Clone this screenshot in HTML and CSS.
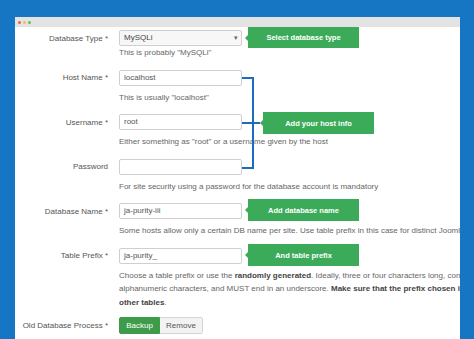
FILE: index.html
```html
<!DOCTYPE html>
<html>
<head>
<title>Database Configuration</title>
<link rel="stylesheet" href="styles.css">
</head>
<body>
<div class="window">
	<div class="title_bar">
		<span class="dot dot_red"></span>
		<span class="dot dot_yellow"></span>
		<span class="dot dot_green"></span>
	</div>
	<div class="form_body">
		<div class="form_row">
			<label class="row_label">Database Type *</label>
			<div class="chs_select">MySQLi<span class="caret">&#9662;</span></div>
			<div class="help help_tight">This is probably "MySQLi"</div>
		</div>
		<div class="form_row">
			<label class="row_label">Host Name *</label>
			<div class="chs_edit">localhost</div>
			<div class="help">This is usually "localhost"</div>
		</div>
		<div class="form_row">
			<label class="row_label">Username *</label>
			<div class="chs_edit">root</div>
			<div class="help">Either something as "root" or a username given by the host</div>
		</div>
		<div class="form_row">
			<label class="row_label">Password</label>
			<div class="chs_edit"></div>
			<div class="help">For site security using a password for the database account is mandatory</div>
		</div>
		<div class="form_row">
			<label class="row_label">Database Name *</label>
			<div class="chs_edit">ja-purity-iii</div>
			<div class="help">Some hosts allow only a certain DB name per site. Use table prefix in this case for distinct Joomla! sites.</div>
		</div>
		<div class="form_row">
			<label class="row_label">Table Prefix *</label>
			<div class="chs_edit">ja-purity_</div>
			<div class="help help_multi">Choose a table prefix or use the <b>randomly generated</b>. Ideally, three or four characters long, contain only<br>alphanumeric characters, and MUST end in an underscore. <b>Make sure that the prefix chosen is not used by</b><br><b>other tables</b>.</div>
		</div>
		<div class="form_row row_last">
			<label class="row_label">Old Database Process *</label>
			<div class="btn_group">
				<button class="btn btn_active">Backup</button>
				<button class="btn">Remove</button>
			</div>
		</div>
	</div>

	<!-- annotation layer -->
	<div class="bracket"></div>
	<div class="bracket_tick"></div>
	<div class="callout" id="callout_type">Select database type</div>
	<div class="callout" id="callout_host">Add your host info</div>
	<div class="callout" id="callout_dbname">Add database name</div>
	<div class="callout" id="callout_prefix">And table prefix</div>
</div>
</body>
</html>
```

FILE: styles.css
```css
body
{
	margin : 0;
	height : 339px;
	overflow : hidden;
	background-color : #1776c4;
	font-family : "Liberation Sans", Arial, sans-serif;
}
.window
{
	position : relative;
	margin : 17px 0 0 15px;
	width : 445px;
	height : 330px;
	background-color : white;
	overflow : hidden;
}
.title_bar
{
	display : flex;
	align-items : center;
	gap : 2px;
	height : 10px;
	padding-left : 3px;
	background-color : #e3e3e3;
}
.dot
{
	width : 3px;
	height : 3px;
	border-radius : 50%;
}
.dot_red { background-color : #ec5f5f; }
.dot_yellow { background-color : #f0bf4c; }
.dot_green { background-color : #5cc25c; }

.form_body
{
	padding-top : 3px;
}
.form_row
{
	display : grid;
	grid-template-columns : 93px 123px;
	column-gap : 11px;
	margin-bottom : 9.5px;
}
.row_label
{
	grid-row : 1;
	grid-column : 1;
	align-self : center;
	text-align : right;
	font-size : 8px;
	color : #555;
	white-space : nowrap;
}
.chs_edit, .chs_select
{
	grid-row : 1;
	grid-column : 2;
	box-sizing : border-box;
	height : 16px;
	padding-left : 4px;
	border : 1px solid #cfcfcf;
	border-radius : 2px;
	font-size : 8px;
	line-height : 14px;
	color : #555;
}
.chs_select
{
	display : flex;
	justify-content : space-between;
	padding-right : 3px;
	background-color : #f7f7f7;
	color : #444;
}
.caret
{
	font-size : 7px;
	color : #666;
}
.help
{
	grid-column : 2;
	margin-top : 5px;
	font-size : 8px;
	line-height : 14px;
	color : #666;
	white-space : nowrap;
}
.help b
{
	color : #444;
}
.help_tight
{
	margin-top : 0;
}
.help_multi
{
	line-height : 13.5px;
}
.row_last
{
	margin-top : -2px;
}
.btn_group
{
	grid-row : 1;
	grid-column : 2;
	display : flex;
}
.btn
{
	height : 17px;
	padding : 0;
	width : 43px;
	font-family : inherit;
	font-size : 8px;
	color : #555;
	background-color : #f3f3f3;
	border : 1px solid #d4d4d4;
	border-left-width : 0;
	border-radius : 0 2px 2px 0;
}
.btn_active
{
	width : 41px;
	color : white;
	background-color : #3e9b49;
	border-color : #3e9b49;
	border-left-width : 1px;
	border-radius : 2px 0 0 2px;
}

/* annotations drawn over the form */
.bracket
{
	position : absolute;
	left : 227px;
	top : 60px;
	width : 10px;
	height : 88px;
	border : 2px solid #1b6dbb;
	border-left : none;
}
.bracket_tick
{
	position : absolute;
	left : 227px;
	top : 105px;
	width : 18px;
	height : 2px;
	background-color : #1b6dbb;
}
.callout
{
	position : absolute;
	width : 111px;
	height : 21px;
	display : flex;
	align-items : center;
	justify-content : center;
	background-color : #3bab59;
	color : white;
	font-size : 7.5px;
	font-weight : bold;
}
.callout::before
{
	content : "";
	position : absolute;
	left : -3px;
	top : 50%;
	margin-top : -3px;
	border-top : 3px solid transparent;
	border-bottom : 3px solid transparent;
	border-right : 3px solid #3bab59;
}
#callout_type
{
	left : 233px;
	top : 10px;
}
#callout_host
{
	left : 248px;
	top : 95px;
	height : 22px;
}
#callout_dbname
{
	left : 233px;
	top : 182px;
	height : 22px;
}
#callout_prefix
{
	left : 233px;
	top : 227px;
	height : 22px;
}
```
